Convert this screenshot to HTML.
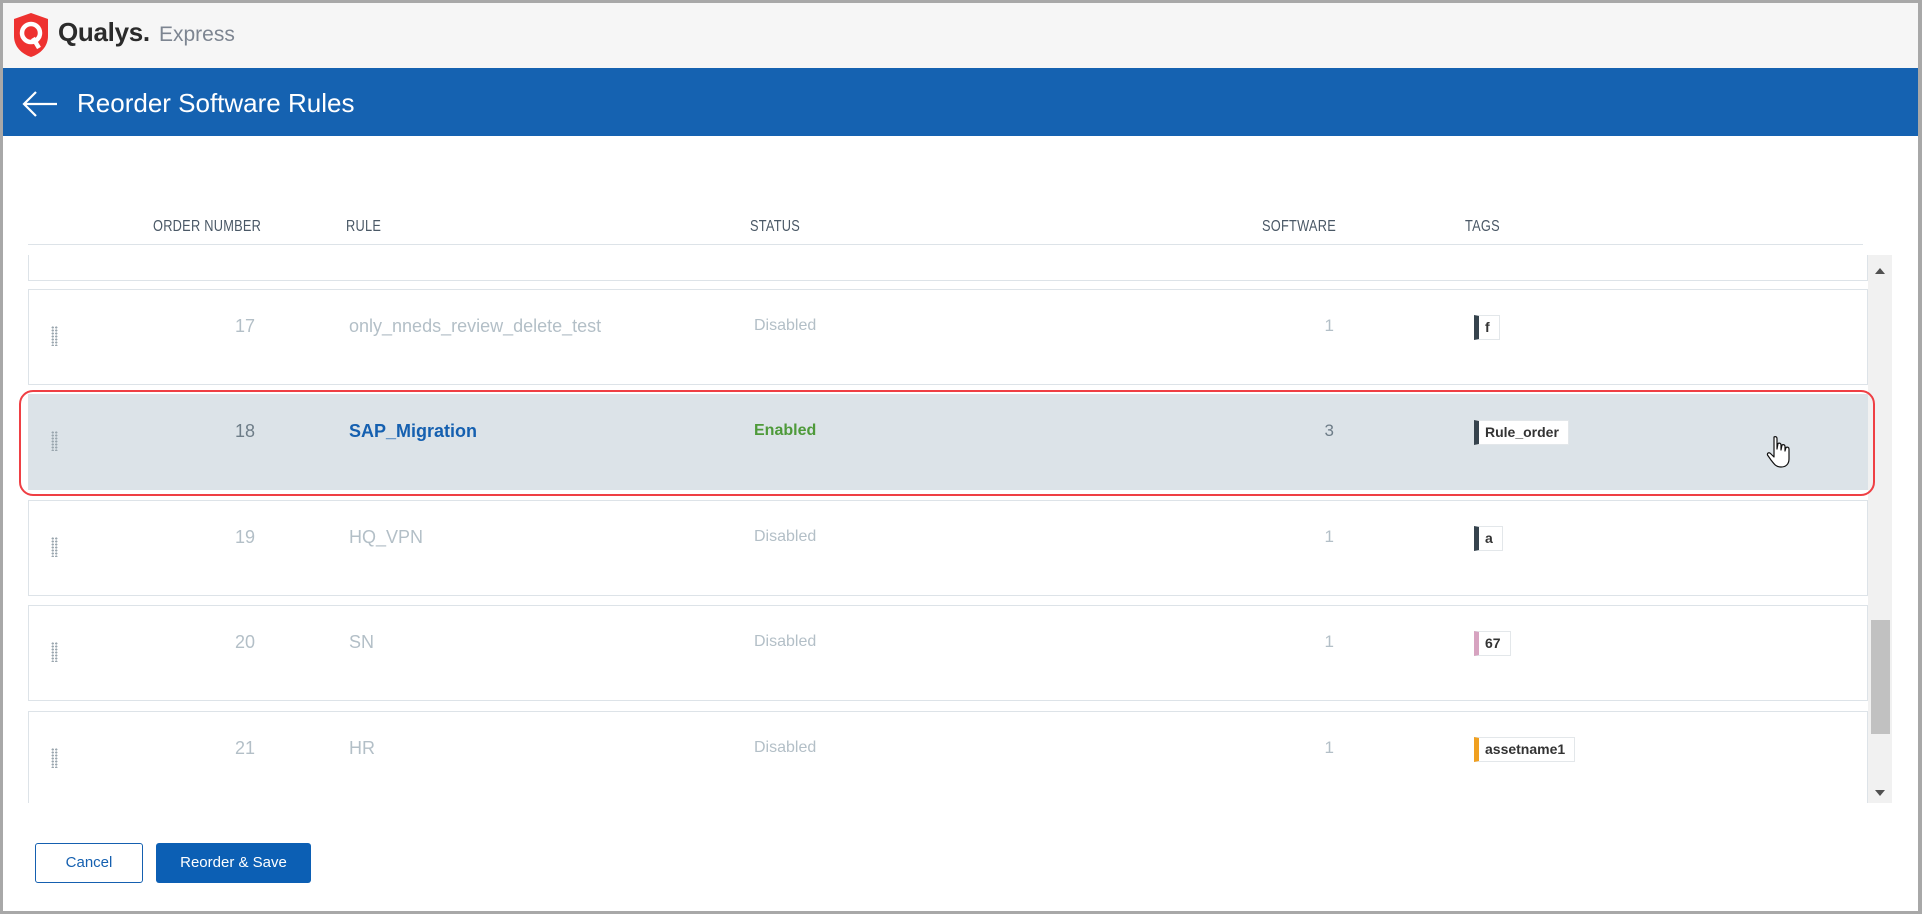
<!DOCTYPE html>
<html><head><meta charset="utf-8"><style>
*{box-sizing:border-box;margin:0;padding:0}
body{width:1922px;height:914px;overflow:hidden;background:#a8a8a8;font-family:"Liberation Sans",Arial,sans-serif;position:relative}
#frame{position:absolute;left:3px;top:3px;width:1915px;height:908px;background:#fff;overflow:hidden}
.top{position:absolute;left:0;top:0;width:100%;height:65px;background:#f6f6f6}
.blue{position:absolute;left:0;top:65px;width:100%;height:68px;background:#1562b1}
.abs{position:absolute}
.hdr{position:absolute;top:215px;font-size:16px;color:#4a5866;transform:scaleX(.8);transform-origin:left;letter-spacing:.3px}
.row{position:absolute;left:25px;width:1840px;height:96px;background:#fff;border:1px solid #dde3e8}
.row .n{position:absolute;right:1612px;top:26px;font-size:18px;color:#b3bfc7}
.row .r{position:absolute;left:320px;top:26px;font-size:18px;color:#b3bfc7}
.row .s{position:absolute;left:725px;top:27px;font-size:16px;color:#b3bfc7}
.row .w{position:absolute;right:533px;top:26px;font-size:17px;color:#b3bfc7}
.tag{position:absolute;left:1445px;top:25px;height:25px;border:1px solid #e3e7ea;border-left:5px solid #36434d;background:#fff;font-size:14px;font-weight:bold;color:#333;padding:3px 9px 0 6px}
.dh{position:absolute;left:22px;top:36px;width:7px;height:20px;background-image:radial-gradient(circle,#9aa6ae 1px,transparent 1.3px);background-size:3.5px 3px}
</style></head><body><div id="frame">
<div class="top"></div>
<svg class="abs" style="left:9px;top:9px" width="38" height="46" viewBox="0 0 38 46"><path d="M19 1 L36 7 V24 C36 35 28 42 19 45 C10 42 2 35 2 24 V7 Z" fill="#ee3230"/><circle cx="19" cy="21" r="9" fill="none" stroke="#fff" stroke-width="4.5"/><path d="M21 26 L27 36" stroke="#fff" stroke-width="4.5"/></svg>
<div class="abs" style="left:55px;top:14px;font-size:26px;font-weight:bold;color:#2b2b2b;letter-spacing:-.3px">Qualys.</div>
<div class="abs" style="left:156px;top:20px;font-size:21px;color:#7d8591">Express</div>
<div class="blue"></div>
<svg class="abs" style="left:18px;top:86px" width="38" height="30" viewBox="0 0 38 30"><path d="M36 15 H3 M15 3 L3 15 L15 27" stroke="#fff" stroke-width="2.2" fill="none"/></svg>
<div class="abs" style="left:74px;top:85px;font-size:26px;color:#fff">Reorder Software Rules</div>
<div class="hdr" style="left:150px">ORDER NUMBER</div>
<div class="hdr" style="left:343px">RULE</div>
<div class="hdr" style="left:747px">STATUS</div>
<div class="hdr" style="left:1259px">SOFTWARE</div>
<div class="hdr" style="left:1462px">TAGS</div>
<div class="abs" style="left:25px;top:241px;width:1835px;height:1px;background:#dde3e8"></div>
<div class="abs" style="left:25px;top:252px;width:1867px;height:548px;overflow:hidden">
 <div class="row" style="left:0;top:-70px"></div>
 <div class="row" style="left:0;top:34px"><div class="dh"></div><div class="n">17</div><div class="r">only_nneds_review_delete_test</div><div class="s">Disabled</div><div class="w">1</div><div class="tag">f</div></div>
 <div class="row" style="left:0;top:139px;background:#dce3e8;border-color:#dce3e8"><div class="dh"></div><div class="n" style="color:#6e7d88">18</div><div class="r" style="color:#1560b0;font-weight:bold">SAP_Migration</div><div class="s" style="color:#4e9a3a;font-weight:bold">Enabled</div><div class="w" style="color:#6e7d88">3</div><div class="tag">Rule_order</div></div>
 <div class="row" style="left:0;top:245px"><div class="dh"></div><div class="n">19</div><div class="r">HQ_VPN</div><div class="s">Disabled</div><div class="w">1</div><div class="tag">a</div></div>
 <div class="row" style="left:0;top:350px"><div class="dh"></div><div class="n">20</div><div class="r">SN</div><div class="s">Disabled</div><div class="w">1</div><div class="tag" style="border-left-color:#d7a3c0">67</div></div>
 <div class="row" style="left:0;top:456px"><div class="dh"></div><div class="n">21</div><div class="r">HR</div><div class="s">Disabled</div><div class="w">1</div><div class="tag" style="border-left-color:#f0a020">assetname1</div></div>
 <div class="abs" style="left:1840px;top:0;width:24px;height:548px;background:#f1f1f1"></div>
 <div class="abs" style="left:1843px;top:365px;width:19px;height:114px;background:#c1c1c1"></div>
 <div class="abs" style="left:1847px;top:13px;width:0;height:0;border:5px solid transparent;border-bottom:6px solid #505050;border-top:0"></div>
 <div class="abs" style="left:1847px;top:535px;width:0;height:0;border:5px solid transparent;border-top:6px solid #505050;border-bottom:0"></div>
</div>
<div class="abs" style="left:16px;top:387px;width:1856px;height:106px;border:2.5px solid #ef3f44;border-radius:14px"></div>
<svg class="abs" style="left:1763px;top:432px" width="26" height="34" viewBox="0 0 26 34"><path d="M8 2 C9.5 1 11 2 11 3.5 V14 L12 8.5 C13.5 7.5 15 8.5 15 10 V15 L16 10 C17.5 9 19 10 19 11.5 V16 L20 12.5 C21.5 11.5 23 12.5 23 14 V24 C23 29 20 32 15 32 C10 32 8 29 5 25 L1.5 20 C1 18 3 17 4.5 18.5 L8 22 Z" fill="#fff" stroke="#111" stroke-width="1.2" stroke-linejoin="round"/></svg>
<div class="abs" style="left:32px;top:840px;width:108px;height:40px;border:1px solid #1560b0;border-radius:3px;color:#1560b0;font-size:15px;text-align:center;line-height:38px">Cancel</div>
<div class="abs" style="left:153px;top:840px;width:155px;height:40px;background:#0c5fb4;border-radius:3px;color:#fff;font-size:15px;text-align:center;line-height:40px">Reorder &amp; Save</div>
</div></body></html>
